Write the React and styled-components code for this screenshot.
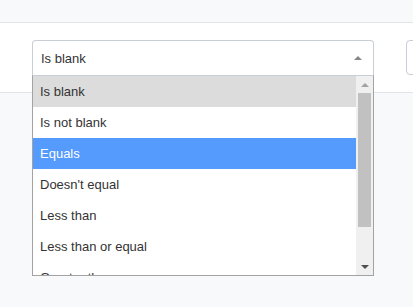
import React from "react";
import styled, { createGlobalStyle } from "styled-components";

const GlobalStyle = createGlobalStyle`
  html, body {
    margin: 0;
    padding: 0;
    background: #f8f9fb;
    font-family: "Liberation Sans", Arial, sans-serif;
  }
`;

const Page = styled.div`
  width: 413px;
  height: 307px;
  overflow: hidden;
  background: #f8f9fb;
`;

const TopBand = styled.div`
  height: 22px;
  background: #f8f9fb;
  border-bottom: 1px solid #e1e4e8;
`;

const FilterRow = styled.div`
  display: flex;
  gap: 32px;
  height: 52px;
  padding: 17px 0 0 32px;
  background: #fff;
  border-bottom: 1px solid #e1e4e8;
  box-sizing: content-box;
`;

const SelectWrap = styled.div`
  position: relative;
  width: 342px;
  flex-shrink: 0;
`;

const SelectBox = styled.div`
  display: flex;
  align-items: center;
  justify-content: space-between;
  height: 35px;
  box-sizing: border-box;
  padding: 0 11px 0 8px;
  border: 1px solid #c9cdd6;
  border-bottom: none;
  border-radius: 4px 4px 0 0;
  font-size: 13px;
  color: #333;
  background: #fff;
`;

const Caret = styled.span`
  width: 0;
  height: 0;
  border-left: 4px solid transparent;
  border-right: 4px solid transparent;
  border-bottom: ${(p) => (p.$size || 4)}px solid ${(p) => p.$color || "#888"};
`;

const DownCaret = styled.span`
  width: 0;
  height: 0;
  border-left: 4px solid transparent;
  border-right: 4px solid transparent;
  border-top: 4px solid #505050;
`;

const SideInput = styled.div`
  width: 40px;
  height: 35px;
  flex-shrink: 0;
  box-sizing: border-box;
  border: 1px solid #c9cdd6;
  border-radius: 4px;
  background: #fff;
`;

const Dropdown = styled.div`
  position: absolute;
  top: 35px;
  left: 0;
  width: 342px;
  height: 201px;
  box-sizing: border-box;
  display: flex;
  border: 1px solid #a3a3a3;
  border-top: 1px solid #c9cdd6;
  background: #fff;
  overflow: hidden;
`;

const OptionList = styled.div`
  flex: 1;
  overflow: hidden;
`;

const Option = styled.div`
  height: 31px;
  line-height: 31px;
  padding-left: 7px;
  font-size: 13px;
  white-space: nowrap;
  color: ${(p) => (p.$selected ? "#fff" : "#333")};
  background: ${(p) =>
    p.$selected ? "#559afd" : p.$current ? "#dcdcdc" : "#fff"};
`;

const Scrollbar = styled.div`
  width: 17px;
  display: flex;
  flex-direction: column;
  background: #f0f0f0;
`;

const ScrollButton = styled.div`
  height: 17px;
  display: flex;
  align-items: center;
  justify-content: center;
`;

const Track = styled.div`
  flex: 1;
  padding: 0 2px;
`;

const Thumb = styled.div`
  height: 134px;
  background: #c1c1c1;
`;

const options = [
  "Is blank",
  "Is not blank",
  "Equals",
  "Doesn't equal",
  "Less than",
  "Less than or equal",
  "Greater than",
];

export default function App() {
  return (
    <Page>
      <GlobalStyle />
      <TopBand />
      <FilterRow>
        <SelectWrap>
          <SelectBox>
            <span>Is blank</span>
            <Caret />
          </SelectBox>
          <Dropdown>
            <OptionList>
              {options.map((o, i) => (
                <Option key={o} $current={i === 0} $selected={i === 2}>
                  {o}
                </Option>
              ))}
            </OptionList>
            <Scrollbar>
              <ScrollButton>
                <Caret $color="#a3a3a3" />
              </ScrollButton>
              <Track>
                <Thumb />
              </Track>
              <ScrollButton>
                <DownCaret />
              </ScrollButton>
            </Scrollbar>
          </Dropdown>
        </SelectWrap>
        <SideInput />
      </FilterRow>
    </Page>
  );
}
